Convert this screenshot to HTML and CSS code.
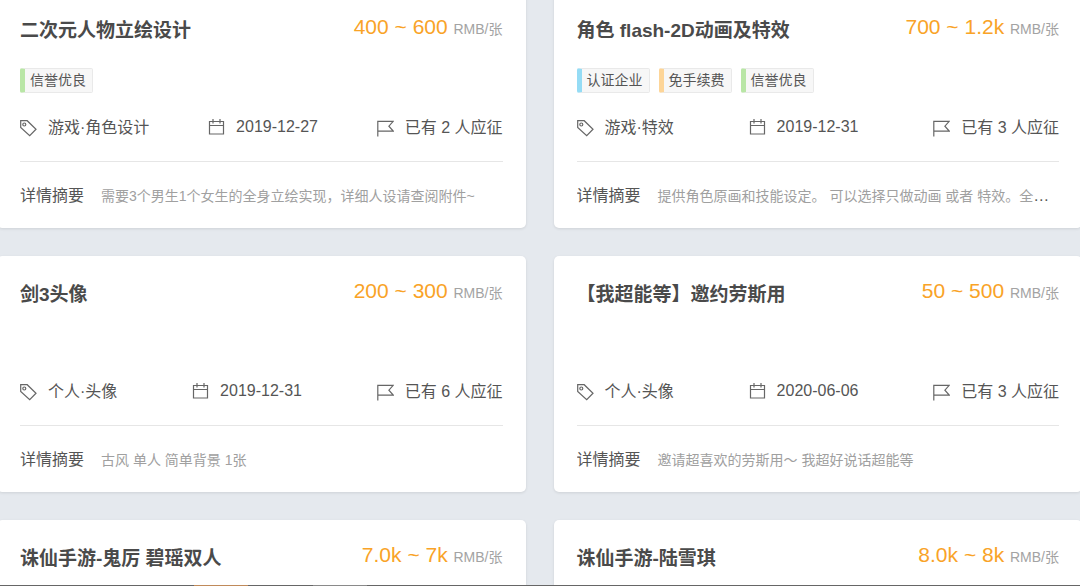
FILE: index.html
```html
<!DOCTYPE html>
<html lang="zh-CN">
<head>
    <meta charset="UTF-8">
    <title>企划列表</title>
    <link rel="stylesheet" href="styles.css">
</head>
<body>
    <svg class="sprite" aria-hidden="true">
        <symbol id="icon-tag" viewBox="0 0 17 17">
            <path d="M.7.7h6.5l8.8 8.5-6.3 6.4L.7 7.4z"/>
            <circle cx="4.3" cy="4.5" r="1.5"/>
        </symbol>
        <symbol id="icon-date" viewBox="0 0 17 17">
            <path d="M1.5 2.5h14v12.5h-14zM1.5 6.5h14M5 0v4.5M12 0v4.5"/>
        </symbol>
        <symbol id="icon-flag" viewBox="0 0 17 17">
            <path d="M.8 16.5V1.3h15.4l-4.3 4.9 4.3 4.9H.8"/>
        </symbol>
    </svg>
    <main class="list">
        <article class="card">
            <div class="head">
                <h2 class="title">二次元人物立绘设计</h2>
                <p class="price">400 ~ 600 <span class="unit">RMB/张</span></p>
            </div>
            <div class="tags">
                <span class="tag green">信誉优良</span>
            </div>
            <ul class="meta">
                <li><svg class="icon"><use href="#icon-tag"/></svg>游戏·角色设计</li>
                <li class="date"><svg class="icon"><use href="#icon-date"/></svg>2019-12-27</li>
                <li><svg class="icon"><use href="#icon-flag"/></svg>已有 2 人应征</li>
            </ul>
            <p class="summary">详情摘要<span class="text">需要3个男生1个女生的全身立绘实现，详细人设请查阅附件~</span></p>
        </article>
        <article class="card">
            <div class="head">
                <h2 class="title">角色 flash-2D动画及特效</h2>
                <p class="price">700 ~ 1.2k <span class="unit">RMB/张</span></p>
            </div>
            <div class="tags">
                <span class="tag blue">认证企业</span>
                <span class="tag orange">免手续费</span>
                <span class="tag green">信誉优良</span>
            </div>
            <ul class="meta">
                <li><svg class="icon"><use href="#icon-tag"/></svg>游戏·特效</li>
                <li class="date"><svg class="icon"><use href="#icon-date"/></svg>2019-12-31</li>
                <li><svg class="icon"><use href="#icon-flag"/></svg>已有 3 人应征</li>
            </ul>
            <p class="summary">详情摘要<span class="text">提供角色原画和技能设定。 可以选择只做动画 或者 特效。全</span>…</p>
        </article>
        <article class="card">
            <div class="head">
                <h2 class="title">剑3头像</h2>
                <p class="price">200 ~ 300 <span class="unit">RMB/张</span></p>
            </div>
            <div class="tags"></div>
            <ul class="meta">
                <li><svg class="icon"><use href="#icon-tag"/></svg>个人·头像</li>
                <li class="date"><svg class="icon"><use href="#icon-date"/></svg>2019-12-31</li>
                <li><svg class="icon"><use href="#icon-flag"/></svg>已有 6 人应征</li>
            </ul>
            <p class="summary">详情摘要<span class="text">古风 单人 简单背景 1张</span></p>
        </article>
        <article class="card">
            <div class="head">
                <h2 class="title">【我超能等】邀约劳斯用</h2>
                <p class="price">50 ~ 500 <span class="unit">RMB/张</span></p>
            </div>
            <div class="tags"></div>
            <ul class="meta">
                <li><svg class="icon"><use href="#icon-tag"/></svg>个人·头像</li>
                <li class="date"><svg class="icon"><use href="#icon-date"/></svg>2020-06-06</li>
                <li><svg class="icon"><use href="#icon-flag"/></svg>已有 3 人应征</li>
            </ul>
            <p class="summary">详情摘要<span class="text">邀请超喜欢的劳斯用～ 我超好说话超能等</span></p>
        </article>
        <article class="card">
            <div class="head">
                <h2 class="title">诛仙手游-鬼厉 碧瑶双人</h2>
                <p class="price">7.0k ~ 7k <span class="unit">RMB/张</span></p>
            </div>
        </article>
        <article class="card">
            <div class="head">
                <h2 class="title">诛仙手游-陆雪琪</h2>
                <p class="price">8.0k ~ 8k <span class="unit">RMB/张</span></p>
            </div>
        </article>
    </main>
    <footer class="bar"></footer>
</body>
</html>
```
FILE: styles.css
```css
*{
    box-sizing: border-box;
    margin: 0;
    padding: 0;
}
body{
    display: flex;
    flex-direction: column;
    height: 100vh;
    overflow: hidden;
    background-color: #e5e9ee;
    color: #555;
    font: 16px/28px "Liberation Sans", "Noto Sans CJK SC", sans-serif;
}
.sprite{
    display: none;
}
.list{
    flex: 1;
    min-height: 0;
    display: grid;
    grid-template-columns: repeat(2, minmax(0, 1fr));
    align-content: start;
    gap: 28px;
    margin: -8px -2px 0 -3px;
}
.card{
    padding: 24px 23px 18px;
    background-color: white;
    border-radius: 5px;
    box-shadow: 0 1px 3px rgba(0,0,0,0.1);
}
.head{
    display: flex;
    justify-content: space-between;
}
.title{
    font-size: 19px;
    line-height: 30px;
    color: #4a4a4a;
}
.price{
    font-size: 21px;
    line-height: 22px;
    color: #f9a327;
}
.unit{
    font-size: 14px;
    color: #a3a3a3;
}
.tags{
    display: flex;
    gap: 9px;
    height: 25px;
    margin-top: 22px;
}
.tag{
    padding: 0 6px 0 5px;
    border: 1px solid #e9e9e9;
    border-left: 5px solid;
    border-radius: 2px;
    background-color: #f7f7f7;
    font-size: 14px;
    line-height: 22px;
}
.green{
    border-left-color: #b9e6a6;
}
.blue{
    border-left-color: #95dcf5;
}
.orange{
    border-left-color: #fdd598;
}
.meta{
    display: flex;
    justify-content: space-between;
    padding: 21px 0 19px;
    border-bottom: 1px solid #e6e6e6;
    list-style: none;
}
.meta li{
    display: flex;
    align-items: center;
    gap: 11px;
}
.meta .date{
    height: 26px;
}
.icon{
    width: 17px;
    height: 17px;
    fill: none;
    stroke: #666;
    stroke-width: 1.2;
}
.summary{
    padding-top: 20px;
    overflow: hidden;
    white-space: nowrap;
    text-overflow: ellipsis;
}
.text{
    margin-left: 17px;
    font-size: 14px;
    color: #a0a0a0;
}
/* top edge of the bottom bar */
.bar{
    height: 1px;
    background: linear-gradient(to right, #666 18%, #c08a5a 18%, #c08a5a 23%, #666 23%, #666 29%, #8a8a8a 29%, #8a8a8a 34%, #666 34%);
}
```
